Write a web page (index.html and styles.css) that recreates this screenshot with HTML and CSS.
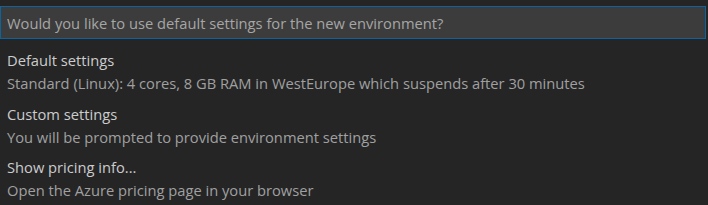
FILE: index.html
```html
<!DOCTYPE html>
<html lang="en">
<head>
    <meta charset="UTF-8">
    <title>Quick Pick</title>
    <link rel="stylesheet" href="styles.css">
</head>
<body>

    <!-- Quick pick panel -->
    <div class="quick-pick">
        <div class="quick-input">
            <input type="text" placeholder="Would you like to use default settings for the new environment?" autofocus>
        </div>

        <ul class="pick-list">
            <li>
                <div class="pick-label">Default settings</div>
                <div class="pick-detail">Standard (Linux): 4 cores, 8 GB RAM in WestEurope which suspends after 30 minutes</div>
            </li>
            <li>
                <div class="pick-label">Custom settings</div>
                <div class="pick-detail">You will be prompted to provide environment settings</div>
            </li>
            <li>
                <div class="pick-label">Show pricing info...</div>
                <div class="pick-detail">Open the Azure pricing page in your browser</div>
            </li>
        </ul>
    </div>

</body>
</html>
```

FILE: styles.css
```css
* {
    box-sizing: border-box;
    margin: 0;
    padding: 0;
}
body {
    font-family: "Open Sans", sans-serif;
    font-size: 14.7px;
    background-color: #252526;
    color: #cccccc;
    width: 708px;
    height: 205px;
    overflow: hidden;
}
.quick-pick {
    padding-top: 6px;
}
.quick-input {
    margin-right: 2px;
}
.quick-input input {
    width: 100%;
    height: 33px;
    padding: 0 6px;
    border: 1px solid #0e639c;
    background-color: #3c3c3c;
    color: #cccccc;
    caret-color: #cccccc;
    font-family: inherit;
    font-size: 14.7px;
    outline: none;
}
.quick-input input::placeholder {
    color: #a6a6a6;
}

/* List of choices */
.pick-list {
    list-style-type: none;
    padding-top: 5px;
}
.pick-list li {
    padding: 4px 7px 0;
    height: 53.5px;
}
.pick-label {
    line-height: 24px;
    color: #cccccc;
}
.pick-detail {
    line-height: 22px;
    color: #a0a0a0;
}
```
